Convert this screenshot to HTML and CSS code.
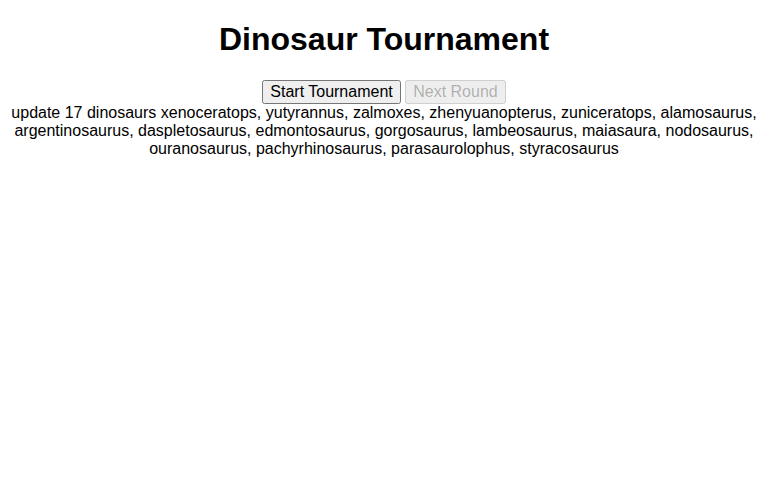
FILE: index.html
```html
<!DOCTYPE html>
<html>
<head>
<meta charset="utf-8">
<link rel="stylesheet" href="styles.css">
</head>
<body>
<div class="app">
<h1 class="title">Dinosaur Tournament</h1>
<div class="controls">
<button class="btn">Start Tournament</button>
<button class="btn" disabled>Next Round</button>
</div>
<div class="status">update 17 dinosaurs xenoceratops, yutyrannus, zalmoxes, zhenyuanopterus, zuniceratops, alamosaurus, argentinosaurus, daspletosaurus, edmontosaurus, gorgosaurus, lambeosaurus, maiasaura, nodosaurus, ouranosaurus, pachyrhinosaurus, parasaurolophus, styracosaurus</div>
</div>
</body>
</html>
```
FILE: styles.css
```css
body {
  margin: 0 8px 8px;
  font-family: "Liberation Sans", Arial, sans-serif;
  font-size: 16px;
  color: #000;
  background: #fff;
}
.app {
  text-align: center;
  padding-top: 0.02px;
}
.title {
  font-size: 32px;
  font-weight: bold;
  margin: 21.44px 0;
}
.btn {
  font-family: "Liberation Sans", Arial, sans-serif;
  font-size: 16px;
}
```
